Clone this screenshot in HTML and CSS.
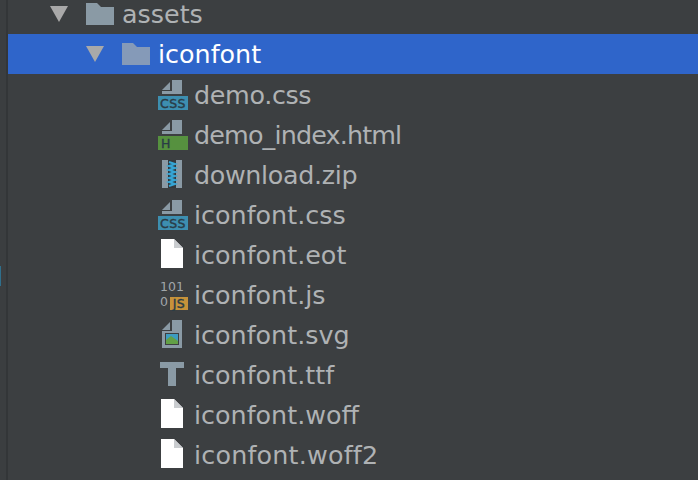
FILE: index.html
```html
<!DOCTYPE html>
<html lang="en">
  <head>
    <meta charset="UTF-8" />
    <title>Project tree</title>
    <link rel="stylesheet" href="styles.css">
  </head>
  <body>
    <div class="gutter"><span class="gutter-mark"></span></div>
    <div class="tree">
      <div class="row level-1">
        <svg class="arrow" viewBox="0 0 18 16"><path d="M0 0H18L9 16Z" /></svg>
        <svg class="folder" viewBox="0 0 28 22"><path d="M0 0H11L15 4H28V22H0Z" /></svg>
        <span class="name">assets</span>
      </div>
      <div class="row level-2 selected">
        <svg class="arrow" viewBox="0 0 18 16"><path d="M0 0H18L9 16Z" /></svg>
        <svg class="folder" viewBox="0 0 28 22"><path d="M0 0H11L15 4H28V22H0Z" /></svg>
        <span class="name">iconfont</span>
      </div>

      <div class="row file">
        <svg class="icon" viewBox="0 0 32 32">
          <path class="gray" d="M5 11L13 3V11ZM15 1H25V15H5V12H15Z" />
          <rect class="css-bg" x="1" y="17" width="30" height="14" />
          <text class="tag" x="16" y="29" text-anchor="middle">CSS</text>
        </svg>
        <span class="name tight">demo.css</span>
      </div>
      <div class="row file">
        <svg class="icon" viewBox="0 0 32 32">
          <path class="gray" d="M5 11L13 3V11ZM15 1H25V15H5V12H15Z" />
          <rect class="html-bg" x="1" y="17" width="30" height="14" />
          <text class="tag" x="4" y="29">H</text>
        </svg>
        <span class="name tighter">demo_index.html</span>
      </div>
      <div class="row file">
        <svg class="icon" viewBox="0 0 32 32">
          <path class="gray" d="M5 1H11V29H5ZM19 1H25V29H19Z" />
          <rect class="zip-bg" x="11" y="1" width="8" height="28" />
          <path class="zipper" d="M12 3L18 5L12 7L18 9L12 11L18 13L12 15L18 17L12 19L18 21L12 23L18 25L12 27" />
        </svg>
        <span class="name tight">download.zip</span>
      </div>
      <div class="row file">
        <svg class="icon" viewBox="0 0 32 32">
          <path class="gray" d="M5 11L13 3V11ZM15 1H25V15H5V12H15Z" />
          <rect class="css-bg" x="1" y="17" width="30" height="14" />
          <text class="tag" x="16" y="29" text-anchor="middle">CSS</text>
        </svg>
        <span class="name">iconfont.css</span>
      </div>
      <div class="row file">
        <svg class="icon" viewBox="0 0 32 32">
          <path class="white" d="M4 0H17L26 9V29H4Z" />
          <path class="fold" d="M17 0L26 9H17Z" />
        </svg>
        <span class="name">iconfont.eot</span>
      </div>
      <div class="row file">
        <svg class="icon" viewBox="0 0 32 32">
          <text class="bits" x="3" y="12">101</text>
          <text class="bits" x="3" y="27">0</text>
          <rect class="js-bg" x="13" y="18" width="18" height="13" />
          <text class="tag" x="22" y="29" text-anchor="middle">JS</text>
        </svg>
        <span class="name">iconfont.js</span>
      </div>
      <div class="row file">
        <svg class="icon" viewBox="0 0 32 32">
          <path class="gray" d="M5 11L13 3V11ZM15 1H25V29H5V12H15Z" />
          <rect class="pic-bg" x="8" y="14" width="14" height="12" />
          <rect class="sky" x="9" y="15" width="12" height="10" />
          <path class="hill" d="M9 25V21L14 17L21 22V25Z" />
        </svg>
        <span class="name">iconfont.svg</span>
      </div>
      <div class="row file">
        <svg class="icon" viewBox="0 0 32 32">
          <path class="gray" d="M3 3H27V9H19V27H11V9H3Z" />
        </svg>
        <span class="name">iconfont.ttf</span>
      </div>
      <div class="row file">
        <svg class="icon" viewBox="0 0 32 32">
          <path class="white" d="M4 0H17L26 9V29H4Z" />
          <path class="fold" d="M17 0L26 9H17Z" />
        </svg>
        <span class="name">iconfont.woff</span>
      </div>
      <div class="row file">
        <svg class="icon" viewBox="0 0 32 32">
          <path class="white" d="M4 0H17L26 9V29H4Z" />
          <path class="fold" d="M17 0L26 9H17Z" />
        </svg>
        <span class="name wide">iconfont.woff2</span>
      </div>
    </div>
  </body>
</html>
```

FILE: styles.css
```css
* {
  box-sizing: border-box;
  margin: 0;
  padding: 0;
}
html,
body {
  height: 100%;
  overflow: hidden;
}
body {
  display: flex;
  background: #3c3f41;
  font-family: "DejaVu Sans", sans-serif;
  color: #afb2b4;
}

.gutter {
  flex: none;
  width: 8px;
  height: 100%;
  padding-top: 266px;
  background: #3b3e40;
  border-right: 2px solid #333638;
}
.gutter-mark {
  display: block;
  width: 1px;
  height: 20px;
  background: #2f6f8c;
}

.tree {
  flex: 1;
  margin-top: -6px;
}
.row {
  display: flex;
  align-items: center;
  height: 40px;
  font-size: 25.4px;
  white-space: nowrap;
}
.selected {
  background: #2f65ca;
  color: #fff;
  margin-bottom: 1px;
}
.level-1 {
  padding-left: 42px;
}
.level-2 {
  padding-left: 78px;
}
.file {
  padding-left: 149px;
}
.tight {
  letter-spacing: -0.35px;
}
.tighter {
  letter-spacing: -0.85px;
}
.wide {
  letter-spacing: 0.2px;
}

.arrow {
  flex: none;
  width: 18px;
  height: 16px;
  margin-right: 18px;
  fill: #a9a9a9;
}
.folder {
  flex: none;
  width: 28px;
  height: 22px;
  margin-right: 8px;
  fill: #8a9aa5;
}
.selected .folder {
  fill: #859ab8;
}

.icon {
  flex: none;
  width: 32px;
  height: 32px;
  margin-right: 5px;
}
.gray {
  fill: #8a9aa5;
}
.white {
  fill: #fff;
}
.fold {
  fill: #c9cccf;
}
.css-bg {
  fill: #3d8fb0;
}
.html-bg {
  fill: #56913f;
}
.js-bg {
  fill: #c6923a;
}
.zip-bg {
  fill: #33383c;
}
.zipper {
  fill: none;
  stroke: #35a6d6;
  stroke-width: 2;
}
.pic-bg {
  fill: #3c3f41;
}
.sky {
  fill: #3d9cc0;
}
.hill {
  fill: #62a046;
}
.tag {
  font-size: 12.5px;
  letter-spacing: 0.4px;
  stroke: #2a3c46;
  stroke-width: 0.4px;
  fill: #2a3c46;
}
.bits {
  font-size: 12.5px;
  fill: #a0a6aa;
}
```
